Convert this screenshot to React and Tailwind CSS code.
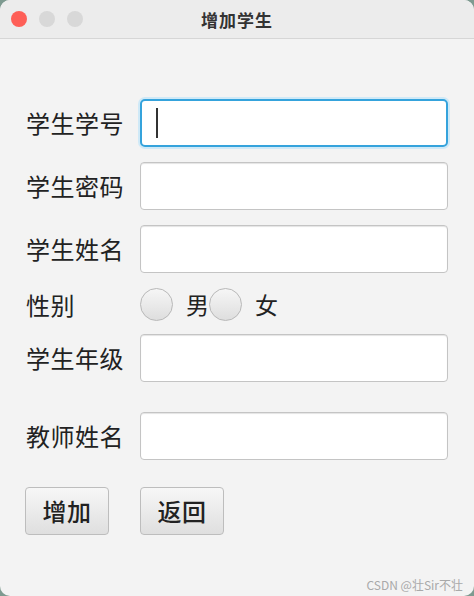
const font = { fontFamily: '"Noto Sans CJK SC", "Noto Sans", sans-serif' }

function Light({ color }) {
  return <span className={`block w-[16px] h-[16px] rounded-full ${color}`} />
}

function Field({ label, focused, className = '' }) {
  return (
    <div className={`flex items-center h-[48px] ${className}`}>
      <span className="w-[114px] text-[24px] leading-none tracking-[0.5px] text-[#222]">{label}</span>
      {focused ? (
        <div className="w-[308px] h-[48px] rounded-[5px] border-2 border-[#35a3dc] bg-white shadow-[0_0_0_2px_#cfe9f7] flex items-center pl-[14px]">
          <span className="block w-[2px] h-[30px] bg-[#333]" />
        </div>
      ) : (
        <div className="w-[308px] h-[48px] rounded-[4px] border border-[#c4c4c4] bg-white shadow-[inset_0_1px_1px_#e4e4e4]" />
      )}
    </div>
  )
}

function Radio() {
  return (
    <span className="block w-[33px] h-[33px] rounded-full border border-[#b8b8b8] bg-gradient-to-b from-[#f6f6f6] to-[#dedede]" />
  )
}

function Btn({ children }) {
  return (
    <button
      type="button"
      className="w-[84px] h-[48px] rounded-[4px] border border-[#bdbdbd] bg-gradient-to-b from-[#f7f7f7] to-[#dfdfdf] text-[24px] leading-none font-medium tracking-[0.5px] text-[#222]"
    >
      {children}
    </button>
  )
}

export default function App() {
  return (
    <div className="w-[474px] h-[596px] bg-[#7e9a90]" style={font}>
      <div className="w-full h-full rounded-[10px] bg-[#f3f3f3] flex flex-col overflow-hidden">
        {/* title bar */}
        <div className="relative h-[39px] shrink-0 bg-[#ececec] border-b border-[#d6d6d6] flex items-center justify-center">
          <div className="absolute left-[11px] top-[11px] flex gap-[12px]">
            <Light color="bg-[#fe5f57]" />
            <Light color="bg-[#d8d8d8]" />
            <Light color="bg-[#d8d8d8]" />
          </div>
          <span className="text-[17px] leading-none font-semibold text-[#333] tracking-[1px]">增加学生</span>
        </div>

        {/* form */}
        <div className="flex flex-col pl-[26px] pt-[60px]">
          <Field label="学生学号" focused />
          <Field label="学生密码" className="mt-[15px]" />
          <Field label="学生姓名" className="mt-[15px]" />
          <div className="flex items-center h-[33px] mt-[15px]">
            <span className="w-[114px] text-[24px] leading-none tracking-[0.5px] text-[#222]">性别</span>
            <Radio />
            <span className="ml-[13px] text-[23px] leading-none text-[#222]">男</span>
            <Radio />
            <span className="ml-[13px] text-[23px] leading-none text-[#222]">女</span>
          </div>
          <Field label="学生年级" className="mt-[13px]" />
          <Field label="教师姓名" className="mt-[30px]" />
          <div className="flex gap-[31px] mt-[27px] -ml-[1px]">
            <Btn>增加</Btn>
            <Btn>返回</Btn>
          </div>
        </div>

        <div className="mt-auto pb-[5px] pr-[11px] text-right text-[12px] leading-none text-[#a9a9a9]">
          CSDN @壮Sir不壮
        </div>
      </div>
    </div>
  )
}
